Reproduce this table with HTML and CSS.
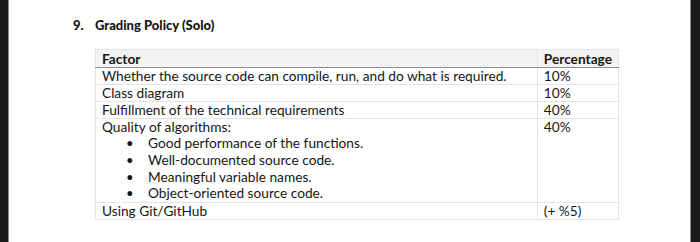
FILE: index.html
```html
<!DOCTYPE html>
<html>
<head>
  <title>Grading Policy</title>
  <link rel="stylesheet" href="styles.css">
</head>
<body>
  <div class="screen">
    <div class="edge edge-left"></div>
    <div class="page">
      <h2 class="heading"><span class="num">9.</span>Grading Policy (Solo)</h2>
      <table class="grades">
        <thead>
          <tr>
            <th class="factor">Factor</th>
            <th class="pct">Percentage</th>
          </tr>
        </thead>
        <tbody>
          <tr>
            <td>Whether the source code can compile, run, and do what is required.</td>
            <td>10%</td>
          </tr>
          <tr>
            <td>Class diagram</td>
            <td>10%</td>
          </tr>
          <tr>
            <td>Fulfillment of the technical requirements</td>
            <td>40%</td>
          </tr>
          <tr>
            <td>
              Quality of algorithms:
              <ul class="bullets">
                <li>Good performance of the functions.</li>
                <li>Well-documented source code.</li>
                <li>Meaningful variable names.</li>
                <li>Object-oriented source code.</li>
              </ul>
            </td>
            <td>40%</td>
          </tr>
          <tr>
            <td>Using Git/GitHub</td>
            <td>(+ %5)</td>
          </tr>
        </tbody>
      </table>
    </div>
    <div class="edge edge-right"></div>
  </div>
</body>
</html>
```

FILE: styles.css
```css
html, body {
  margin: 0;
  padding: 0;
  background: #fff;
}

.screen {
  display: flex;
  height: 242px;
  width: 700px;
  font-family: Lato, "Liberation Sans", sans-serif;
  color: #161616;
}

.edge {
  background: #1b1b1b;
}
.edge-left {
  width: 8px;
  border-right: 1px solid #8a8a8a;
}
.edge-right {
  width: 9px;
  border-left: 1px solid #8a8a8a;
}

.page {
  flex: 1;
  padding: 17px 0 0 64px;
}

.heading {
  margin: 0 0 15px;
  font-size: 13px;
  font-weight: 900;
  line-height: 17px;
}
.heading .num {
  display: inline-block;
  width: 22px;
}

.grades {
  border-collapse: collapse;
  width: 524px;
  margin-left: 22px;
  font-size: 13.7px;
  line-height: 16px;
}

.grades th,
.grades td {
  border: 1px solid #e4e4e4;
  padding: 0 6px;
  text-align: left;
  vertical-align: top;
}

.grades th {
  background: #f3f3f3;
  font-weight: bold;
  line-height: 17px;
  border-bottom: 1px solid #8e8e8e;
}

.grades .pct {
  width: 61px;
}

.bullets {
  list-style: none;
  margin: 0;
  padding: 0;
}
.bullets li {
  display: flex;
  line-height: 16.75px;
}
.bullets li::before {
  content: "\2022";
  width: 22px;
  margin-left: 24px;
  font-size: 13px;
}
```
